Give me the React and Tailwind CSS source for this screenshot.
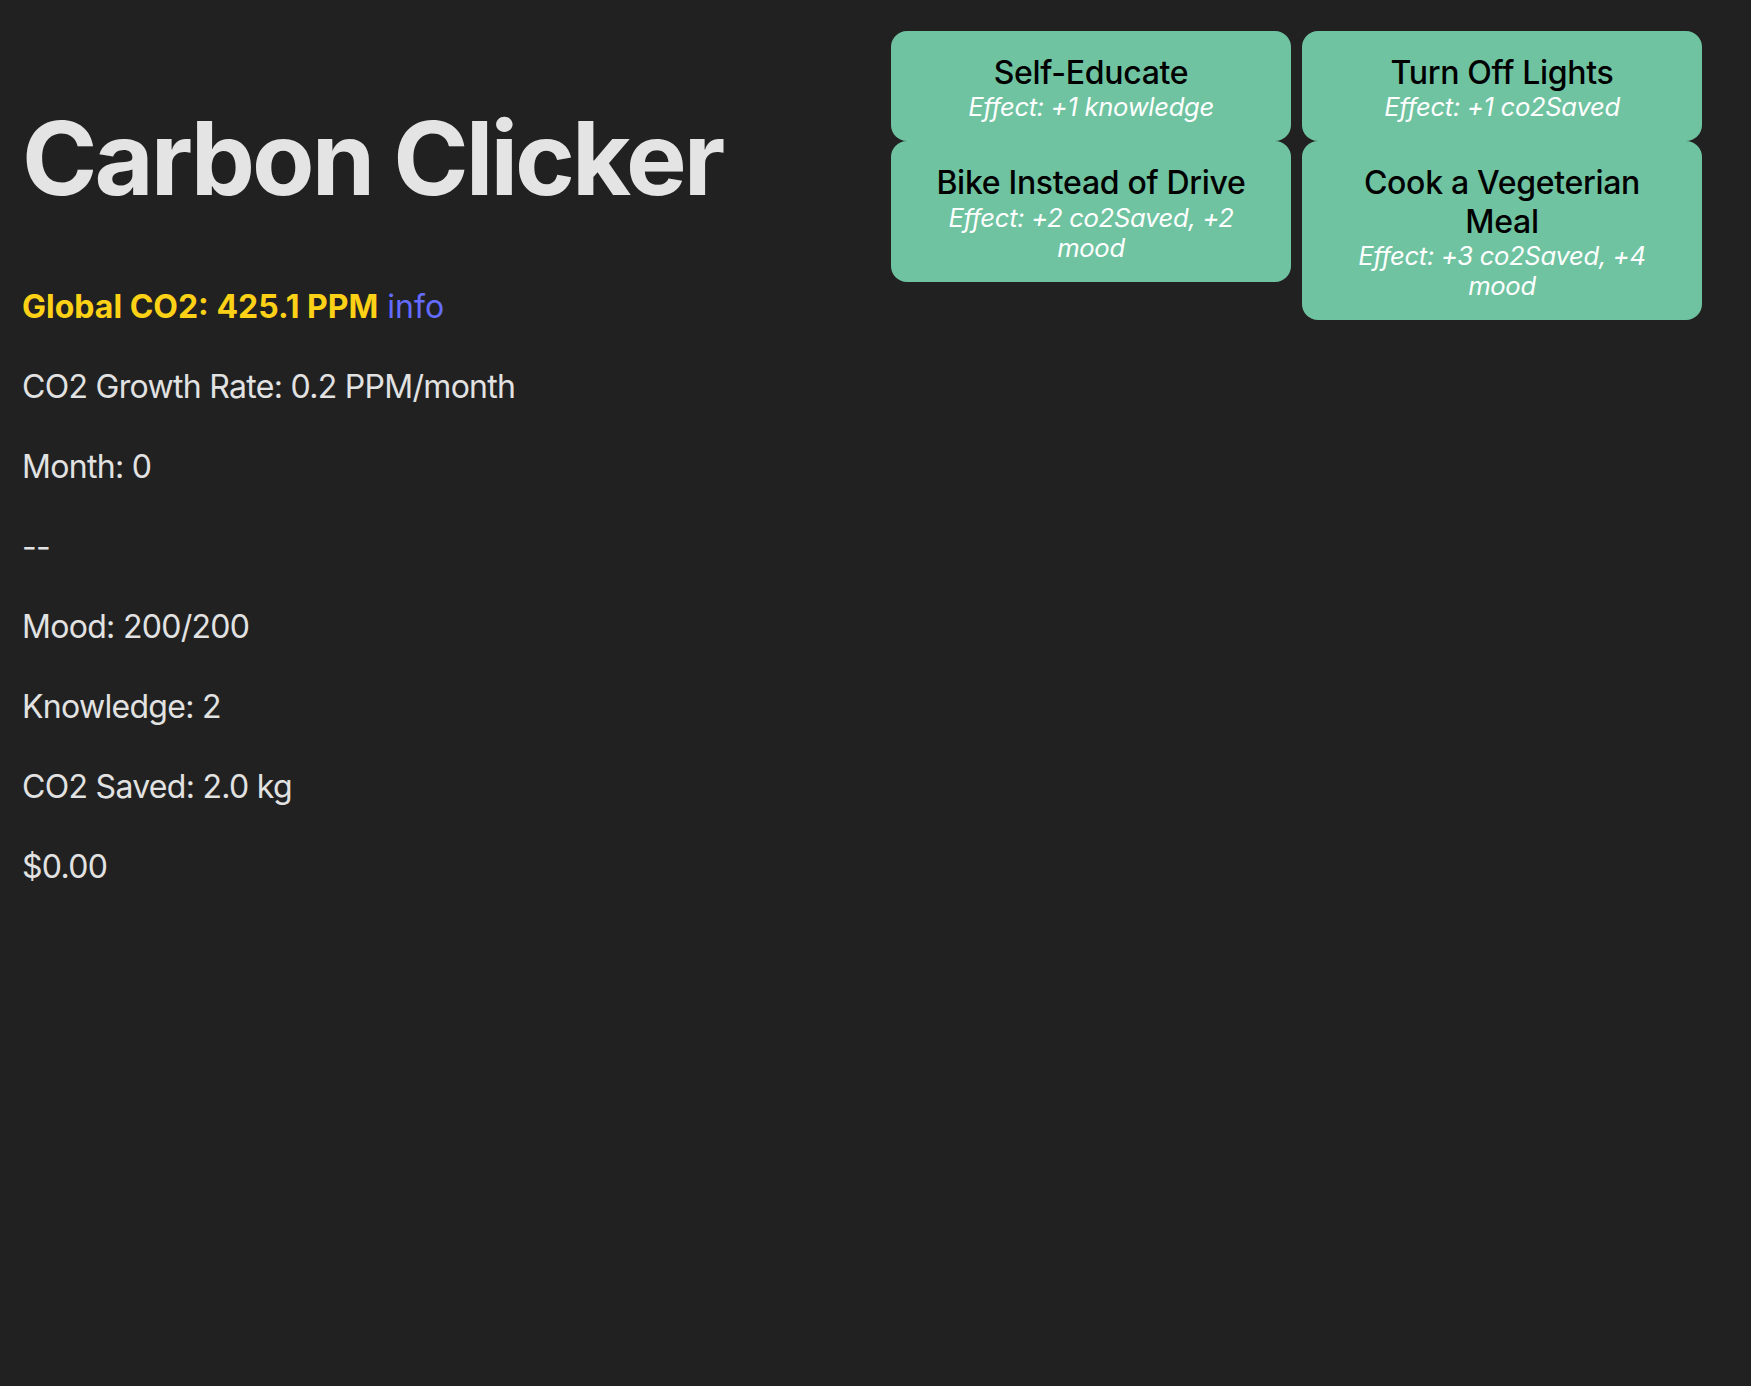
import React from 'react';

const actions = [
  { name: 'Self-Educate', effect: 'Effect: +1 knowledge' },
  { name: 'Turn Off Lights', effect: 'Effect: +1 co2Saved' },
  { name: 'Bike Instead of Drive', effect: 'Effect: +2 co2Saved, +2 mood' },
  { name: 'Cook a Vegeterian Meal', effect: 'Effect: +3 co2Saved, +4 mood' },
];

const stats = [
  'CO2 Growth Rate: 0.2 PPM/month',
  'Month: 0',
  '--',
  'Mood: 200/200',
  'Knowledge: 2',
  'CO2 Saved: 2.0 kg',
  '$0.00',
];

export default function App() {
  return (
    <div className="min-h-screen w-full bg-[#212121] text-[#e2e2e2] font-['Inter',sans-serif] text-[32px] leading-[48px] flex pl-[22px] pr-[49px] pt-[31px]">
      <div className="flex-1 pt-[3px] tracking-[-0.7px]">
        <h1 className="mt-[68px] mb-[69px] text-[102px] leading-[112px] font-bold text-[#e4e4e4] tracking-[-3px]">
          Carbon Clicker
        </h1>
        <p className="mb-[32px] tracking-[0px]">
          <span className="font-bold text-[#fcd116]">Global CO2: 425.1 PPM</span>{' '}
          <a href="#" className="text-[#646cff]">info</a>
        </p>
        {stats.map((s) => (
          <p key={s} className="mb-[32px]">{s}</p>
        ))}
      </div>
      <div className="grid grid-cols-[400px_400px] gap-x-[11px] items-start content-start">
        {actions.map((a) => (
          <button
            key={a.name}
            type="button"
            className="bg-[#6fc3a1] rounded-[16px] px-[38px] pt-[23px] pb-[19px] text-center cursor-pointer tracking-[-0.3px]"
          >
            <div className="text-[32px] leading-[38.4px] text-black font-medium">{a.name}</div>
            <div className="text-[25.6px] leading-[30px] italic text-white">{a.effect}</div>
          </button>
        ))}
      </div>
    </div>
  );
}
